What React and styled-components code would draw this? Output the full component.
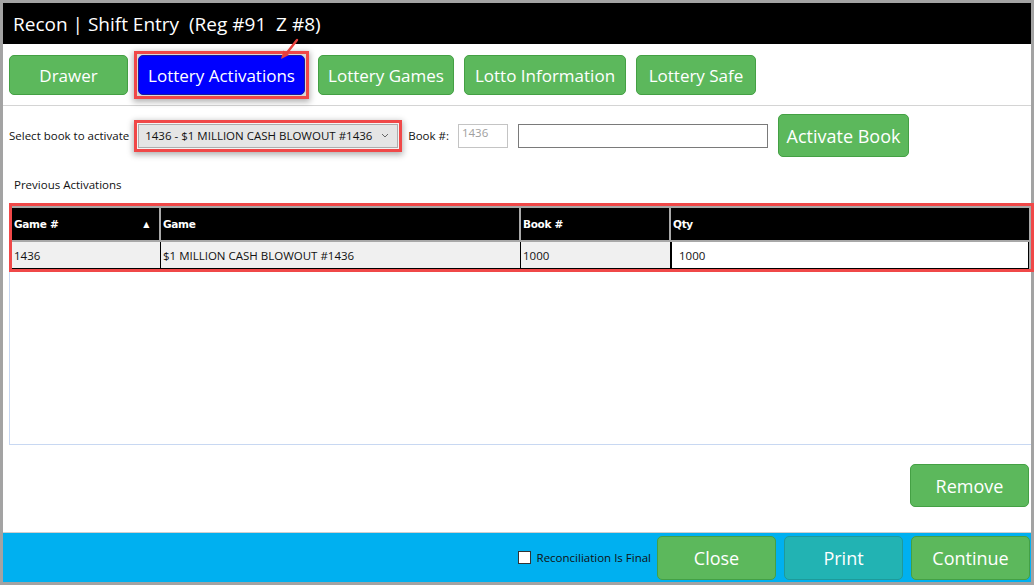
import React from "react";
import styled, { createGlobalStyle } from "styled-components";

const GlobalStyle = createGlobalStyle`
  html, body {
    margin: 0;
    padding: 0;
    background: #a3a3a3;
  }
  body {
    font-family: "Open Sans", "Noto Sans", sans-serif;
  }
`;

const Frame = styled.div`
  width: 1034px;
  height: 585px;
  box-sizing: border-box;
  padding: 3px;
  background: #a3a3a3;
`;

const Window = styled.div`
  position: relative;
  height: 100%;
  background: #fff;
  display: flex;
  flex-direction: column;
`;

const TitleBar = styled.div`
  height: 41px;
  flex-shrink: 0;
  background: #000;
  color: #fff;
  font-size: 19px;
  display: flex;
  align-items: center;
  padding-left: 10px;
  white-space: pre;
`;

const TabRow = styled.div`
  height: 62px;
  flex-shrink: 0;
  box-sizing: border-box;
  border-bottom: 1px solid #d4d4d4;
  display: flex;
  align-items: flex-start;
  gap: 10px;
  padding: 11px 0 0 6px;
`;

const Button = styled.button`
  width: ${(p) => p.$w}px;
  height: ${(p) => p.$h || 40}px;
  flex-shrink: 0;
  box-sizing: border-box;
  padding: 0;
  background: ${(p) => p.$bg || "#5cb85c"};
  border: 1px solid ${(p) => p.$edge || "#44a044"};
  border-radius: 5px;
  color: #fff;
  font-family: "Open Sans", "Noto Sans", sans-serif;
  font-size: ${(p) => p.$size || 17}px;
  cursor: pointer;
`;

const ActiveTab = styled(Button)`
  background: #0000ff;
  border-color: #1a1a9a;
`;

/* red annotation frame drawn around a highlighted control */
const Marked = styled.span`
  display: inline-flex;
  flex-shrink: 0;
  padding: 1px;
  margin: ${(p) => p.$m || "0"};
  border: 3px solid #f04848;
  background: ${(p) => p.$gap || "#d8d8d8"};
  box-shadow: 0 2px 6px 1px rgba(0, 0, 0, 0.3);
`;

const Arrow = styled.svg`
  position: absolute;
  z-index: 2;
  left: 272px;
  top: 35px;
  width: 28px;
  height: 26px;
  pointer-events: none;
`;

const FormRow = styled.div`
  display: flex;
  align-items: center;
  padding: 8px 0 0 6px;
  height: 43px;
`;

const Label = styled.span`
  font-size: 11.5px;
  color: #111;
  margin-right: ${(p) => p.$mr || 10}px;
  white-space: nowrap;
`;

const Combo = styled.div`
  width: 260px;
  height: 24px;
  box-sizing: border-box;
  padding: 0 8px 0 6px;
  display: flex;
  align-items: center;
  justify-content: space-between;
  background: #e5e5e5;
  border: 1px solid #adadad;
  font-size: 11.5px;
  color: #111;
`;

const Field = styled.div`
  width: ${(p) => p.$w}px;
  height: 24px;
  box-sizing: border-box;
  margin-right: 10px;
  border: 1px solid ${(p) => p.$edge || "#7a7a7a"};
  background: #fff;
  color: #a0a0a0;
  font-size: 11.5px;
  padding: 0 0 0 3px;
  line-height: 16px;
`;

const SectionTitle = styled.div`
  margin: 20px 0 0 11px;
  font-size: 11.5px;
  line-height: 16px;
  color: #111;
`;

const Table = styled.div`
  margin: 13px 0 0 6px;
  height: 239px;
  box-sizing: border-box;
  border-left: 1px solid #c8d8f2;
  border-bottom: 1px solid #c8d8f2;
  padding-left: 2px;
`;

const Highlight = styled.div`
  outline: 3px solid #f04848;
  border-top: 2px solid #a8a8a8;
  border-right: 2px solid #a8a8a8;
`;

const Row = styled.div`
  display: grid;
  grid-template-columns: 149px 360px 150px 1fr;
  height: ${(p) => p.$h}px;
  background: ${(p) => p.$bg};
  border-bottom: ${(p) => (p.$line ? "1px solid #000" : "none")};
`;

const HeadCell = styled.div`
  position: relative;
  display: flex;
  align-items: center;
  padding-left: 2px;
  border-right: 2px solid #a8a8a8;
  border-bottom: 2px solid #a8a8a8;
  color: #fff;
  font-family: "DejaVu Sans", sans-serif;
  font-weight: bold;
  font-size: 10.5px;
  letter-spacing: -0.3px;
  &:last-child {
    border-right: none;
  }
`;

const SortMark = styled.span`
  position: absolute;
  right: 10px;
  top: 12px;
  font-size: 8px;
`;

const Cell = styled.div`
  display: flex;
  align-items: center;
  padding-left: ${(p) => p.$pl || 2}px;
  border-right: 1px solid #000;
  background: ${(p) => (p.$selected ? "#fff" : "#f0f0f0")};
  border-left: ${(p) => (p.$selected ? "1px solid #000" : "none")};
  font-size: 11.5px;
  color: #111;
`;

const ActionRow = styled.div`
  display: flex;
  justify-content: flex-end;
  padding: 19px 2px 0 0;
`;

const Footer = styled.div`
  margin-top: auto;
  height: 50px;
  box-sizing: border-box;
  border-top: 1px solid #cfcfcf;
  background: #00b0f0;
  display: flex;
  align-items: center;
  justify-content: flex-end;
  gap: 8px;
  padding: 0 1px 0 0;
`;

const CheckWrap = styled.label`
  display: flex;
  align-items: center;
  gap: 6px;
  margin-right: -2px;
  font-size: 11.5px;
  color: #111;
`;

const Box = styled.span`
  width: 13px;
  height: 13px;
  box-sizing: border-box;
  background: #fff;
  border: 1px solid #333;
`;

const tabs = [
  { label: "Drawer", w: 119 },
  { label: "Lottery Activations", w: 167, active: true },
  { label: "Lottery Games", w: 136 },
  { label: "Lotto Information", w: 162 },
  { label: "Lottery Safe", w: 120 },
];

export default function App() {
  return (
    <Frame>
      <GlobalStyle />
      <Window>
        <TitleBar>{"Recon | Shift Entry  (Reg #91  Z #8)"}</TitleBar>
        <TabRow>
          {tabs.map((t) =>
            t.active ? (
              <Marked key={t.label} $m="-4px -1px 0 -4px">
                <ActiveTab $w={t.w}>{t.label}</ActiveTab>
              </Marked>
            ) : (
              <Button key={t.label} $w={t.w}>
                {t.label}
              </Button>
            )
          )}
        </TabRow>
        <Arrow viewBox="0 0 28 26">
          <path d="M22 2 L11 16" stroke="#e8403c" strokeWidth="2.4" strokeLinecap="round" />
          <path d="M6 21 L8.5 12.5 L14 17 Z" fill="#e8403c" />
        </Arrow>

        <FormRow>
          <Label $mr={5}>Select book to activate</Label>
          <Marked $m="0 6px 0 0" $gap="#f4f4f4">
            <Combo>
              <span>1436 - $1 MILLION CASH BLOWOUT #1436</span>
              <svg width="8" height="5" viewBox="0 0 8 5">
                <path d="M1 1 L4 4 L7 1" fill="none" stroke="#666" strokeWidth="1" />
              </svg>
            </Combo>
          </Marked>
          <Label $mr={9}>Book #:</Label>
          <Field $w={50} $edge="#c4c4c4">1436</Field>
          <Field $w={250} />
          <Button $w={131} $h={43} $size={18}>
            Activate Book
          </Button>
        </FormRow>

        <SectionTitle>Previous Activations</SectionTitle>

        <Table>
          <Highlight>
            <Row $h={34} $bg="#000">
              <HeadCell>
                Game #<SortMark>▲</SortMark>
              </HeadCell>
              <HeadCell>Game</HeadCell>
              <HeadCell>Book #</HeadCell>
              <HeadCell>Qty</HeadCell>
            </Row>
            <Row $h={26} $bg="#f0f0f0" $line>
              <Cell $pl={0}>1436</Cell>
              <Cell>$1 MILLION CASH BLOWOUT #1436</Cell>
              <Cell>1000</Cell>
              <Cell $selected $pl={7}>
                1000
              </Cell>
            </Row>
          </Highlight>
        </Table>

        <ActionRow>
          <Button $w={119} $h={43} $size={18}>
            Remove
          </Button>
        </ActionRow>

        <Footer>
          <CheckWrap>
            <Box />
            Reconciliation Is Final
          </CheckWrap>
          <Button $w={119} $h={44} $size={18}>
            Close
          </Button>
          <Button $w={119} $h={44} $size={18} $bg="#22b3b3" $edge="#1e9a9a">
            Print
          </Button>
          <Button $w={119} $h={44} $size={18}>
            Continue
          </Button>
        </Footer>
      </Window>
    </Frame>
  );
}
